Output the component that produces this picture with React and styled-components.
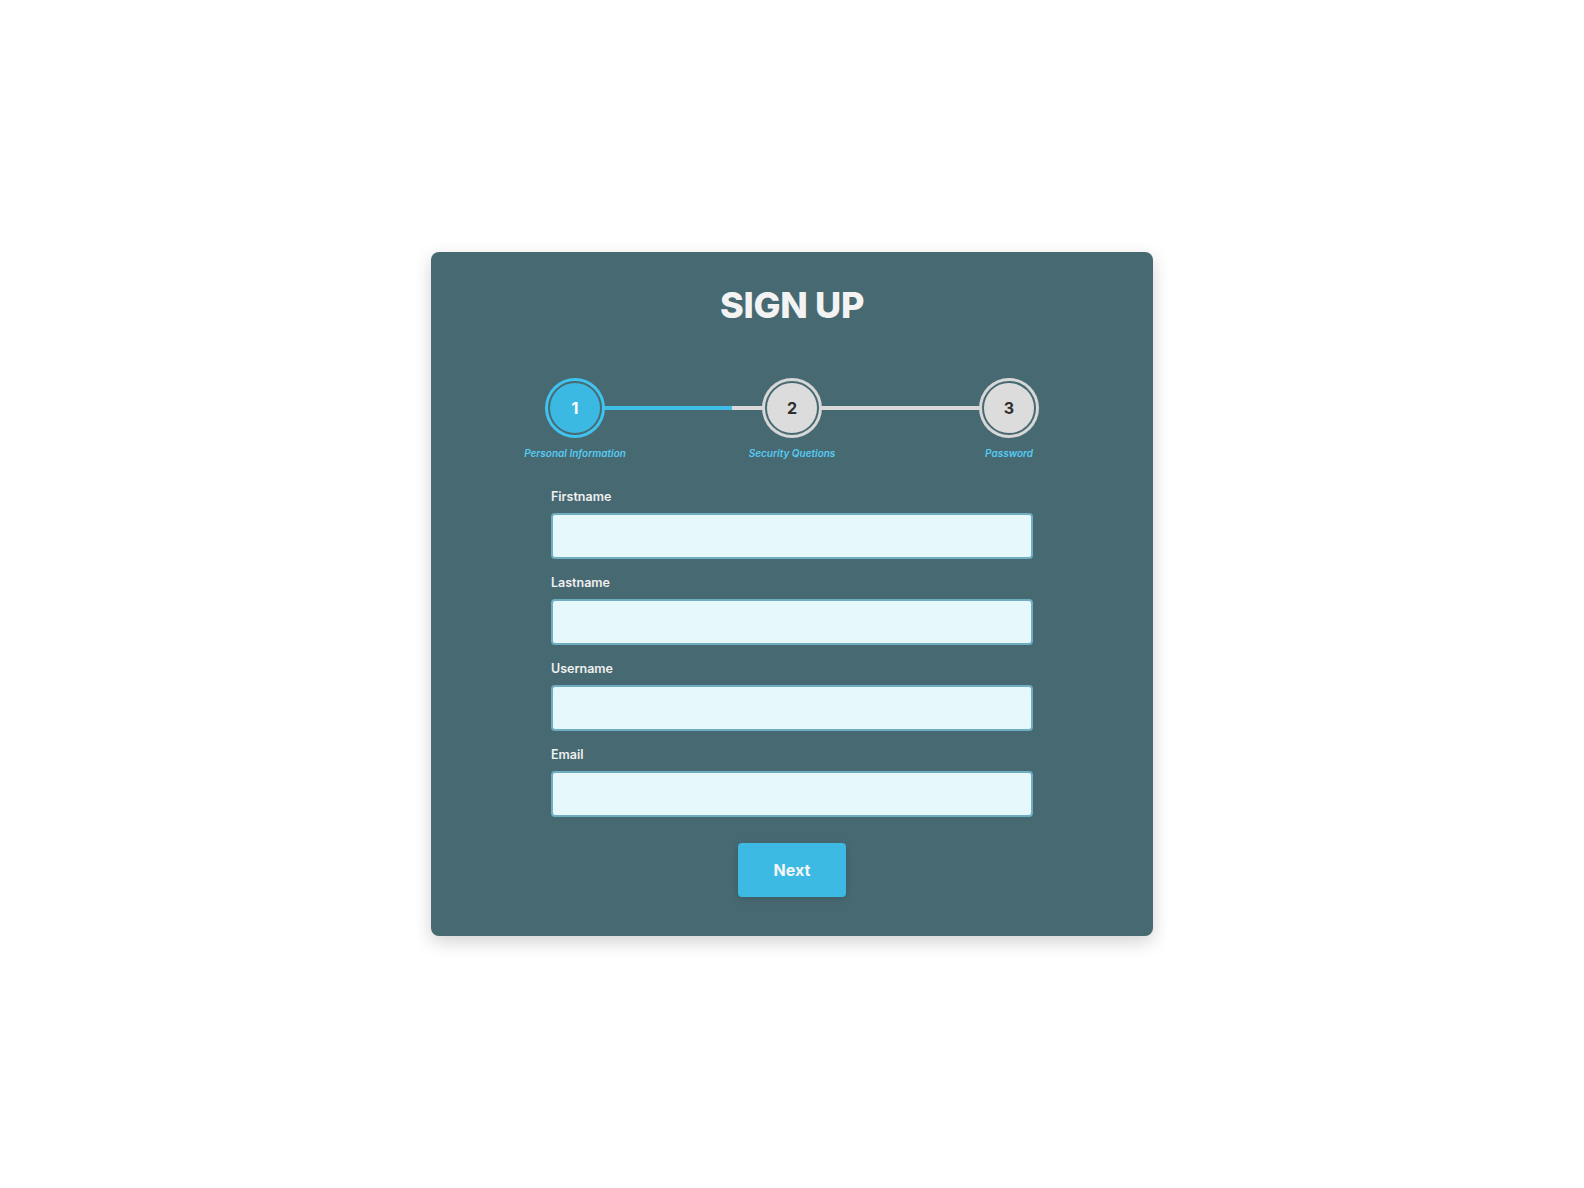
import React from "react";
import styled, { createGlobalStyle } from "styled-components";

const Global = createGlobalStyle`
  html, body { margin: 0; padding: 0; background: #ffffff; }
  body { font-family: Inter, "Noto Sans", sans-serif; }
  * { box-sizing: border-box; }
`;

const Page = styled.div`
  min-height: 100vh;
  display: flex;
  justify-content: center;
  align-items: center;
`;

const Card = styled.div`
  width: 722px;
  height: 684px;
  background: #476972;
  border-radius: 8px;
  box-shadow: 0 6px 18px rgba(0, 0, 0, 0.18);
  padding: 31px 0 39px;
  display: flex;
  flex-direction: column;
  align-items: center;
`;

const Title = styled.h1`
  margin: 0;
  font-family: Inter, sans-serif;
  font-size: 36px;
  line-height: 44px;
  font-weight: 800;
  color: #f3f3f3;
  letter-spacing: -0.3px;
`;

const Stepper = styled.div`
  position: relative;
  width: 535px;
  margin-top: 53.5px;
  display: grid;
  grid-template-columns: repeat(3, 101px);
  justify-content: space-between;
`;

const Track = styled.div`
  position: absolute;
  left: 50px;
  right: 50px;
  top: 25px;
  height: 4px;
  background: #d9d9d9;
`;

const Fill = styled.div`
  height: 100%;
  background: #3ebde6;
`;

const Step = styled.div`
  position: relative;
  z-index: 1;
  display: flex;
  flex-direction: column;
  align-items: center;
`;

const Circle = styled.div`
  width: 54px;
  height: 54px;
  border-radius: 50%;
  display: flex;
  align-items: center;
  justify-content: center;
  background: ${(p) => (p.$active ? "#3cb9e2" : "#dcdcdc")};
  border: 2px solid #476972;
  box-shadow: 0 0 0 3px ${(p) => (p.$active ? "#41c3ef" : "#d7d7d7")};
  font-family: Inter, sans-serif;
  font-weight: 700;
  font-size: 16px;
  color: ${(p) => (p.$active ? "#ffffff" : "#2e2e2e")};
`;

const StepLabel = styled.div`
  margin-top: 11.5px;
  font-family: Inter, sans-serif;
  font-size: 10px;
  line-height: 14px;
  font-style: italic;
  font-weight: 600;
  color: #56cbf3;
  white-space: nowrap;
`;

const Form = styled.form`
  width: 482px;
  margin-top: 28.5px;
  display: flex;
  flex-direction: column;
  gap: 16px;
`;

const Field = styled.div`
  display: flex;
  flex-direction: column;
  gap: 8px;
`;

const Label = styled.label`
  font-family: Inter, sans-serif;
  font-size: 12.5px;
  line-height: 16px;
  font-weight: 600;
  color: #f0f0f0;
`;

const Input = styled.input`
  height: 46px;
  width: 100%;
  background: #e6f8fc;
  border: 2px solid #6eaec0;
  border-radius: 4px;
  outline: none;
  padding: 0 12px;
  font-family: Inter, sans-serif;
  font-size: 14px;
`;

const Button = styled.button`
  margin-top: 26px;
  width: 108px;
  height: 54px;
  border: none;
  border-radius: 4px;
  background: #3cbae3;
  color: #f5f5f5;
  font-family: Inter, sans-serif;
  font-size: 16px;
  font-weight: 700;
  box-shadow: 0 2px 6px rgba(0, 0, 0, 0.15);
  cursor: pointer;
`;

const steps = [
  { n: 1, label: "Personal Information", active: true },
  { n: 2, label: "Security Quetions" },
  { n: 3, label: "Password" },
];

const fields = ["Firstname", "Lastname", "Username", "Email"];

export default function App() {
  return (
    <>
      <Global />
      <Page>
        <Card>
          <Title>SIGN UP</Title>
          <Stepper>
            <Track>
              <Fill style={{ width: "157px" }} />
            </Track>
            {steps.map((s) => (
              <Step key={s.n}>
                <Circle $active={s.active}>{s.n}</Circle>
                <StepLabel>{s.label}</StepLabel>
              </Step>
            ))}
          </Stepper>
          <Form onSubmit={(e) => e.preventDefault()}>
            {fields.map((f) => (
              <Field key={f}>
                <Label>{f}</Label>
                <Input type="text" />
              </Field>
            ))}
          </Form>
          <Button type="button">Next</Button>
        </Card>
      </Page>
    </>
  );
}
